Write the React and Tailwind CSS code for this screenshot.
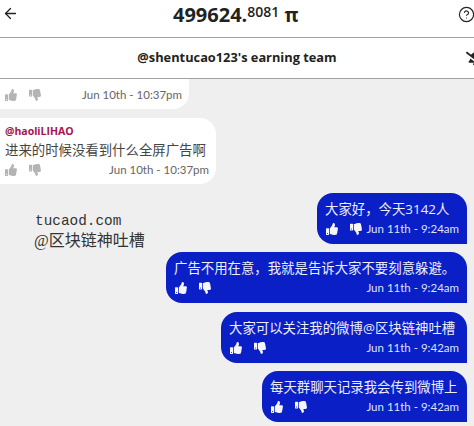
import React from 'react';
import { ArrowLeft, CircleHelp } from 'lucide-react';
import { FaThumbsUp, FaThumbsDown, FaBellSlash } from 'react-icons/fa';

const font = "font-['Open_Sans','Noto_Sans_CJK_SC',sans-serif]";

function Bubble({ name, text, time, mine, width, mt, first }) {
  const shape = mine
    ? 'self-end mr-[7px] bg-[#0a1fc6] text-white rounded-[16px] rounded-br-none pl-[8px] pr-[8px] pb-[6px]'
    : first
      ? 'self-start bg-white rounded-br-[16px] pl-[5px] pr-[7px] pb-[3px] pt-[4px]'
      : 'self-start bg-white rounded-r-[16px] pl-[5px] pr-[7px] pb-[5px]';
  return (
    <div className={`${shape} ${width} ${mt} shrink-0`}>
      {name && <div className="pt-[5px] text-[10.5px] leading-[16px] font-bold text-[#a3154f]">{name}</div>}
      {text && (
        <div className={`text-[13.4px] leading-[22px] whitespace-nowrap ${mine ? 'pt-[5px] text-[#eceeff]' : 'text-[#444]'}`}>{text}</div>
      )}
      <div className={`flex items-center ${first ? 'h-[23px]' : 'h-[18px]'} ${mine ? 'text-[#f4f5ff]' : 'text-[#b4b4b4]'}`}>
        <FaThumbsUp className={`w-[12px] h-[12px] mr-[12px] ${mine ? 'ml-px' : ''}`} />
        <FaThumbsDown className="w-[12px] h-[12px]" />
        <span className={`ml-auto font-['Lato',sans-serif] text-[11.5px] ${mine ? 'text-[#dfe3ff]' : 'text-[#666]'}`}>{time}</span>
      </div>
    </div>
  );
}

export default function App() {
  return (
    <div className={`relative w-[474px] h-[426px] overflow-hidden bg-[#f0efef] flex flex-col ${font}`}>
      {/* top bar */}
      <div className="h-[38px] shrink-0 bg-white border-b border-[#a5a29e] flex items-center relative">
        <ArrowLeft className="ml-[2px] w-[17px] h-[17px] mb-[10px] text-[#222]" strokeWidth={1.8} />
        <div className="absolute left-[173px] top-[1px] text-[#222] font-bold text-[20px] leading-[28px] whitespace-nowrap">
          499624.<span className="text-[14px] font-semibold relative top-[-5px]">8081</span>{' '}
          <span className="font-bold text-[19px]">π</span>
        </div>
        <CircleHelp className="absolute left-[458px] top-[6px] w-[17px] h-[17px] text-[#222]" strokeWidth={1.6} />
      </div>
      {/* team title */}
      <div className="h-[41px] shrink-0 bg-white border-b border-[#a5a29e] flex items-center justify-center relative">
        <span className="text-[12.8px] font-bold text-[#222]">@shentucao123's earning team</span>
        <FaBellSlash className="absolute left-[466px] top-[12px] w-[17px] h-[17px] text-[#222]" />
      </div>
      {/* messages */}
      <div className="flex-1 flex flex-col">
        <Bubble first time="Jun 10th - 10:37pm" width="w-[189px]" />
        <Bubble name="@haoliLIHAO" text="进来的时候没看到什么全屏广告啊" time="Jun 10th - 10:37pm" width="w-[216px]" mt="mt-[9px]" />
        <Bubble mine text="大家好，今天3142人" time="Jun 11th - 9:24am" width="w-[150px]" mt="mt-[9px]" />
        <Bubble mine text="广告不用在意，我就是告诉大家不要刻意躲避。" time="Jun 11th - 9:24am" width="w-[301px]" mt="mt-[8px]" />
        <Bubble mine text="大家可以关注我的微博@区块链神吐槽" time="Jun 11th - 9:42am" width="w-[246px]" mt="mt-[9px]" />
        <Bubble mine text="每天群聊天记录我会传到微博上" time="Jun 11th - 9:42am" width="w-[205px]" mt="mt-[8px]" />
      </div>
      {/* watermark */}
      <div className="absolute left-[35px] top-[211px] font-['Liberation_Mono','Noto_Sans_CJK_SC',monospace] text-[#333] text-[14.4px] leading-[20px]">
        tucaod.com
        <div className="text-[16px] leading-[20px] ml-[-1px] font-['Liberation_Serif','Noto_Sans_CJK_SC',serif]">@区块链神吐槽</div>
      </div>
    </div>
  );
}
